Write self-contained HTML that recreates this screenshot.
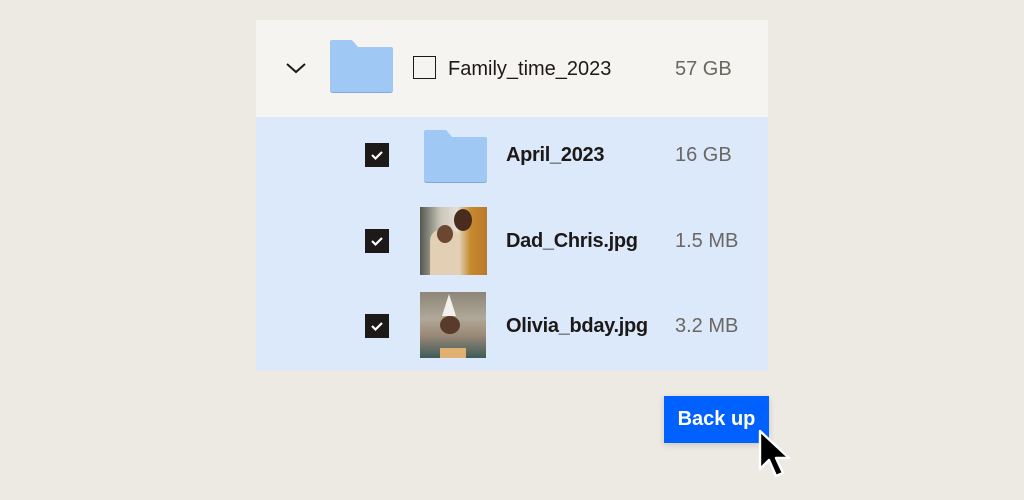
<!DOCTYPE html><html><head><style>
body{margin:0;width:1024px;height:500px;background:#ede9e3;font-family:"Liberation Sans",sans-serif;position:relative;overflow:hidden}
.a{position:absolute}
.top{left:256px;top:20px;width:512px;height:97px;background:#f6f4f0}
.blue{left:256px;top:117px;width:512px;height:253px;background:#dbe9fb}
.t{font-size:20px;color:#1e1919;line-height:24px}
.b{font-weight:bold;letter-spacing:-0.3px}
.s{font-size:20px;color:#6b6763;line-height:24px}
.cb{width:24px;height:24px;background:#1e1919}
</style></head><body>
<div class="a top"></div><div class="a blue"></div>
<svg class="a" style="left:284px;top:60px" width="24" height="16"><path d="M3 4 L12 12 L21 4" stroke="#1e1919" stroke-width="2" fill="none"/></svg>
<svg class="a" style="left:330px;top:40px" width="63" height="53"><path d="M0 2 Q0 0 2 0 H22 L28 7 H61 Q63 7 63 9 V49 Q63 52 60 52 H3 Q0 52 0 49Z" fill="#a0c8f4"/><path d="M0 49 Q0 52 3 52 H60 Q63 52 63 49 V50 Q63 53 60 53 H3 Q0 53 0 50Z" fill="#7fa9d8"/></svg>
<div class="a" style="left:413px;top:56px;width:21px;height:21px;border:1.5px solid #1e1919"></div>
<div class="a t" style="left:448px;top:57px">Family_time_2023</div>
<div class="a s" style="left:675px;top:57px">57 GB</div>

<div class="a cb" style="left:365px;top:143px"></div>
<div class="a cb" style="left:365px;top:229px"></div>
<div class="a cb" style="left:365px;top:314px"></div>
<svg class="a" style="left:365px;top:143px" width="24" height="200"><g stroke="#fff" stroke-width="2.2" fill="none"><path d="M7 12 L10.5 15.5 L17 9"/><path d="M7 98 L10.5 101.5 L17 95"/><path d="M7 183 L10.5 186.5 L17 180"/></g></svg>
<svg class="a" style="left:424px;top:130px" width="63" height="54"><path d="M0 2 Q0 0 2 0 H22 L28 7 H61 Q63 7 63 9 V49 Q63 52 60 52 H3 Q0 52 0 49Z" fill="#a0c8f4"/><path d="M0 49 Q0 52 3 52 H60 Q63 52 63 49 V50 Q63 53 60 53 H3 Q0 53 0 50Z" fill="#7fa9d8"/></svg>
<div class="a t b" style="left:506px;top:143px">April_2023</div>
<div class="a s" style="left:675px;top:143px">16 GB</div>

<div class="a" style="left:420px;top:207px;width:67px;height:68px;background:linear-gradient(90deg,#55584f 0,#c8c4b8 30%,#e6e0d4 55%,#c88a2e 75%,#b9782a 100%)"><div class="a" style="left:10px;top:22px;width:30px;height:46px;background:#e3cfb3;border-radius:12px 12px 0 0"></div><div class="a" style="left:17px;top:18px;width:16px;height:18px;background:#6b4630;border-radius:50%"></div><div class="a" style="left:34px;top:2px;width:18px;height:22px;background:#4a2c1e;border-radius:50%"></div></div>
<div class="a t b" style="left:506px;top:229px">Dad_Chris.jpg</div>
<div class="a s" style="left:675px;top:229px">1.5 MB</div>

<div class="a" style="left:420px;top:292px;width:66px;height:66px;background:linear-gradient(180deg,#8d8578 0,#b0a898 40%,#9c8a78 65%,#3f5a58 100%)"><div class="a" style="left:22px;top:2px;width:14px;height:22px;background:#f3f1ee;clip-path:polygon(50% 0,100% 100%,0 100%)"></div><div class="a" style="left:20px;top:24px;width:20px;height:18px;background:#5a3a2a;border-radius:50%"></div><div class="a" style="left:20px;top:56px;width:26px;height:10px;background:#e0b070"></div></div>
<div class="a t b" style="left:506px;top:314px">Olivia_bday.jpg</div>
<div class="a s" style="left:675px;top:314px">3.2 MB</div>

<div class="a" style="left:664px;top:396px;width:105px;height:47px;background:#0061fe;color:#fff;font-size:20px;font-weight:bold;line-height:47px;text-align:center;box-shadow:0 2px 6px rgba(0,0,0,.15)">Back up</div>
<svg class="a" style="left:757px;top:429px" width="38" height="54"><path d="M3 2 V40 L12 31 L19 47 L26 44 L19 29 H32 Z" fill="#000" stroke="#fff" stroke-width="2.4" stroke-linejoin="round"/></svg>
</body></html>
